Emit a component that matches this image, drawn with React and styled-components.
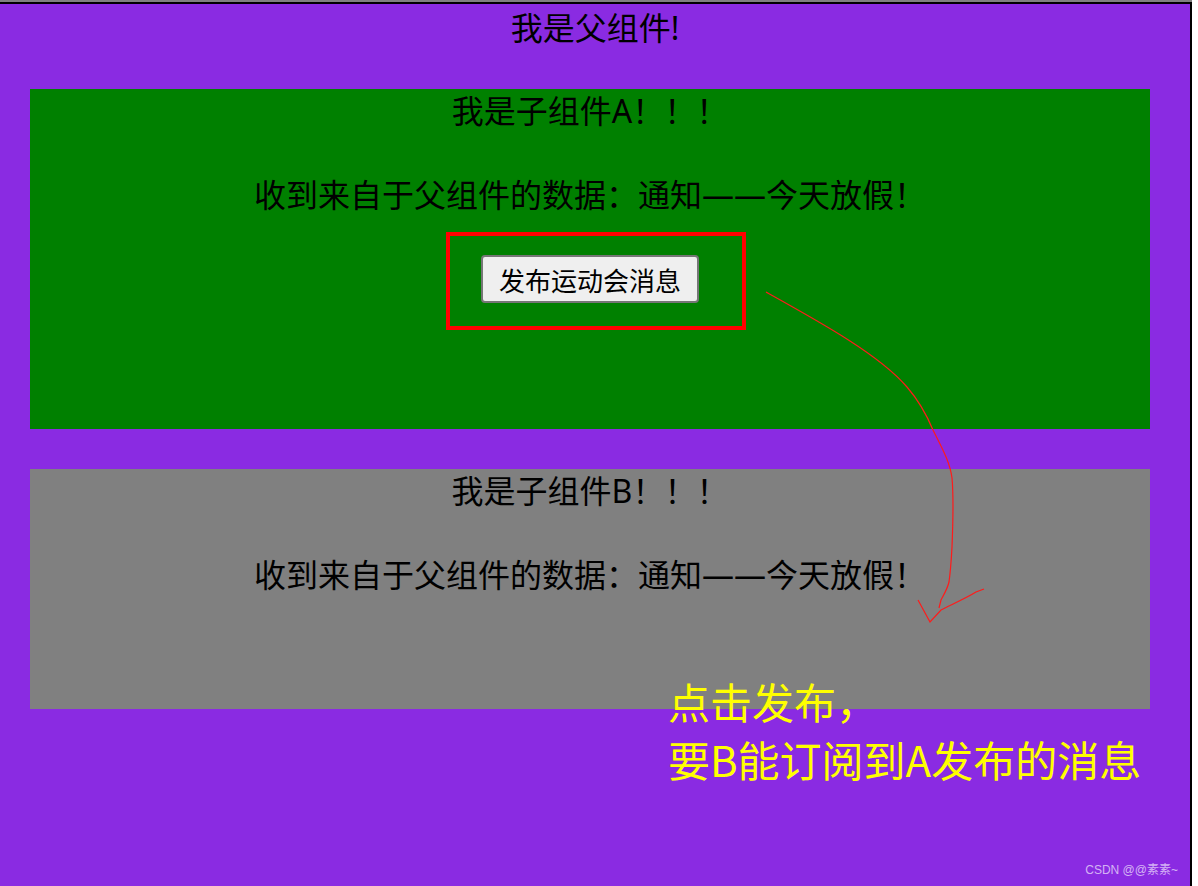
import React from "react";
import styled, { createGlobalStyle } from "styled-components";

const GlobalStyle = createGlobalStyle`
  html, body {
    margin: 0;
    padding: 0;
    background: #ffffff;
  }
  body {
    font-family: "Noto Sans", "Noto Sans CJK SC", sans-serif;
  }
`;

const Screen = styled.div`
  position: relative;
  width: 1192px;
  height: 886px;
  border-top: 2px solid #808080;
  box-sizing: border-box;
  overflow: hidden;
`;

const Parent = styled.div`
  height: 100%;
  background: #8a2be2;
  border-top: 2px solid #000;
  border-right: 2px solid #000;
  box-sizing: border-box;
  color: #000;
`;

const ParentTitle = styled.div`
  font-size: 32px;
  line-height: 48px;
  text-align: center;
  margin-bottom: 37px;
`;

const Child = styled.div`
  width: 1120px;
  height: ${({ $h }) => $h}px;
  margin: 0 0 40px 30px;
  background: ${({ $bg }) => $bg};
  display: flex;
  flex-direction: column;
  align-items: center;
`;

const ChildTitle = styled.div`
  font-size: 32px;
  line-height: 44px;
`;

const Message = styled.div`
  font-size: 32px;
  line-height: 44px;
  margin-top: 40px;
`;

const PublishButton = styled.button`
  margin-top: 38px;
  height: 48px;
  padding: 0 16px;
  font-family: "Noto Sans CJK SC", sans-serif;
  font-size: 26px;
  color: #000;
  background: #efefef;
  border: 2px solid #767676;
  border-radius: 4px;
`;

/* annotations drawn on top of the page */
const Highlight = styled.div`
  position: absolute;
  left: 446px;
  top: 230px;
  width: 300px;
  height: 98px;
  border: 4px solid #ff0000;
  box-sizing: border-box;
  pointer-events: none;
`;

const ArrowLayer = styled.svg`
  position: absolute;
  left: 0;
  top: -2px;
  pointer-events: none;
`;

const Note = styled.div`
  position: absolute;
  left: 668px;
  top: 670px;
  font-family: "Noto Sans CJK SC", sans-serif;
  font-size: 42px;
  line-height: 58px;
  color: #ffff00;
  white-space: pre;
`;

const Watermark = styled.div`
  position: absolute;
  right: 14px;
  bottom: 9px;
  font-family: "Liberation Sans", "Noto Sans CJK SC", sans-serif;
  font-size: 12px;
  color: rgba(255, 255, 255, 0.65);
`;

const notice = "通知——今天放假！";

export default function App() {
  return (
    <>
      <GlobalStyle />
      <Screen>
        <Parent>
          <ParentTitle>我是父组件!</ParentTitle>
          <Child $bg="#008000" $h={340}>
            <ChildTitle>我是子组件A！！！</ChildTitle>
            <Message>收到来自于父组件的数据：{notice}</Message>
            <PublishButton>发布运动会消息</PublishButton>
          </Child>
          <Child $bg="#808080" $h={240}>
            <ChildTitle>我是子组件B！！！</ChildTitle>
            <Message>收到来自于父组件的数据：{notice}</Message>
          </Child>
        </Parent>

        <Highlight />
        <ArrowLayer width="1192" height="886" viewBox="0 0 1192 886">
          <path
            d="M766 292 C820 322 880 355 907 387 C920 402 928 418 933 430 C942 448 950 462 952 478 C954 500 953 520 952 547 C951 565 950 575 949 582 C947 590 943 596 941 600 L939 608"
            fill="none"
            stroke="#ff1a1a"
            strokeWidth="1.2"
          />
          <path
            d="M918 600 L930 622 L941 610 C955 603 968 597 976 592 L984 589"
            fill="none"
            stroke="#ff1a1a"
            strokeWidth="1.2"
          />
        </ArrowLayer>
        <Note>{"点击发布，\n要B能订阅到A发布的消息"}</Note>
        <Watermark>CSDN @@素素~</Watermark>
      </Screen>
    </>
  );
}
